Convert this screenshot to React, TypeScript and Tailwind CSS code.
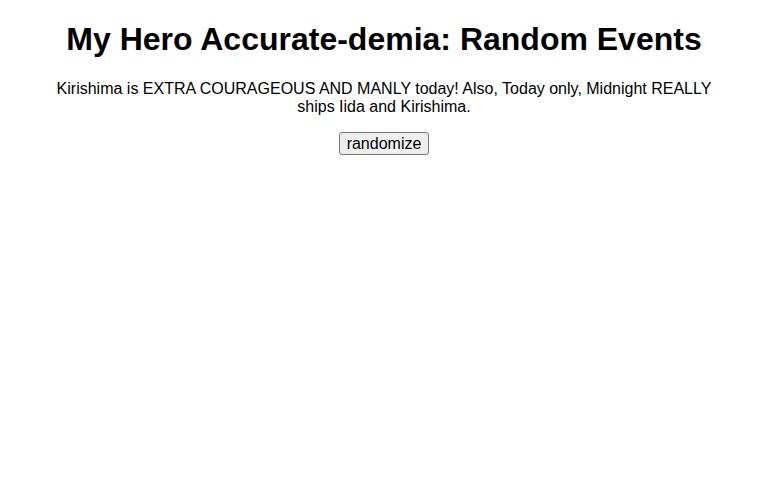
import * as React from 'react'

const events = [
  'Kirishima is EXTRA COURAGEOUS AND MANLY today! Also, Today only, Midnight REALLY ships Iida and Kirishima.',
]

export default function App() {
  const [text, setText] = React.useState(events[0])

  const randomize = () => {
    setText(events[Math.floor(Math.random() * events.length)])
  }

  return (
    <div className="min-h-[480px] bg-white px-[40px] py-[21px] text-center text-black font-['Liberation_Sans',Arial,sans-serif]">
      <h1 className="text-[32px] font-bold leading-[37px]">
        My Hero Accurate-demia: Random Events
      </h1>
      <p className="mt-[22px] text-[16px] leading-[18px]">{text}</p>
      <button
        onClick={randomize}
        className="mt-[16px] px-[7px] py-px text-[16px] leading-[19px] bg-[#efefef] border border-[#767676] rounded-[3px] text-black"
      >
        randomize
      </button>
    </div>
  )
}
